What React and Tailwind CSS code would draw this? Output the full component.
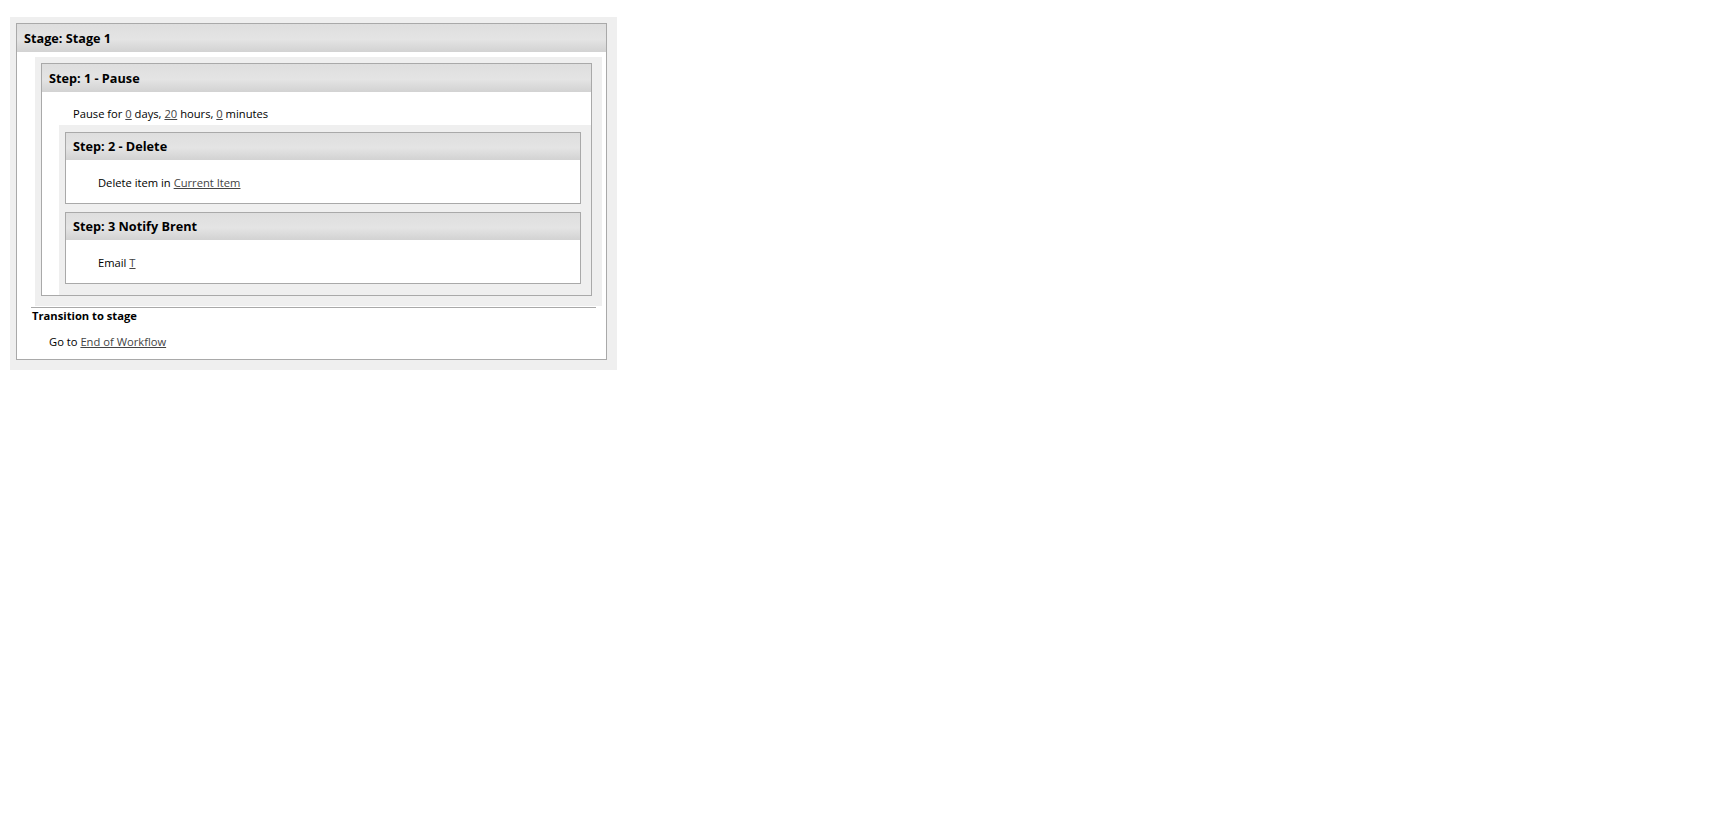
const headerBg =
  'bg-[linear-gradient(to_bottom,#dedede,#e4e4e4_55%,#d2d2d2)]';

function Link({ children }) {
  return <span className="underline text-[#444]">{children}</span>;
}

function Step({ title, children }) {
  return (
    <div className="border border-[#a9a9a9] bg-white">
      <div className={`h-[27px] ${headerBg} pl-[7px] pt-[1px] flex items-center font-bold text-[12.7px]`}>
        {title}
      </div>
      <div className="pl-[32px] pt-[15px] pb-[12px] h-[43px] leading-[16px]">{children}</div>
    </div>
  );
}

export default function App() {
  return (
    <div
      className="min-h-screen bg-white pt-[17px] pl-[10px] text-[11.2px] text-black"
      style={{ fontFamily: '"Open Sans", "Noto Sans", sans-serif' }}
    >
      <div className="w-[607px] bg-[#efefef] pt-[6px] pl-[6px] pr-[10px] pb-[10px]">
        <div className="border border-[#a9a9a9] bg-white">
          <div className={`h-[28px] ${headerBg} pl-[7px] pt-[2px] flex items-center font-bold text-[12.7px]`}>
            Stage: Stage 1
          </div>

          <div className="mt-[5px] ml-[18px] mr-[4px] bg-[#efefef] pt-[6px] pl-[6px] pr-[10px] pb-[10px]">
            <div className="border border-[#a9a9a9] bg-white">
              <div className={`h-[28px] ${headerBg} pl-[7px] pt-[2px] flex items-center font-bold text-[12.7px]`}>
                Step: 1 - Pause
              </div>
              <div className="pl-[31px] pt-[14px] pb-[3px] leading-[16px]">
                Pause for <Link>0</Link> days, <Link>20</Link> hours, <Link>0</Link> minutes
              </div>
              <div className="ml-[17px] bg-[#efefef] pt-[7px] pl-[6px] pr-[10px] pb-[11px] flex flex-col gap-[8px]">
                <Step title="Step: 2 - Delete">
                  Delete item in <Link>Current Item</Link>
                </Step>
                <Step title="Step: 3 Notify Brent">
                  Email <Link>T</Link>
                </Step>
              </div>
            </div>
          </div>

          <div className="mt-[1px] ml-[14px] mr-[10px] border-t border-[#a9a9a9]" />
          <div className="ml-[15px] font-bold leading-[16px]">Transition to stage</div>
          <div className="ml-[32px] mt-[10px] pb-[9px] leading-[16px]">
            Go to <Link>End of Workflow</Link>
          </div>
        </div>
      </div>
    </div>
  );
}
